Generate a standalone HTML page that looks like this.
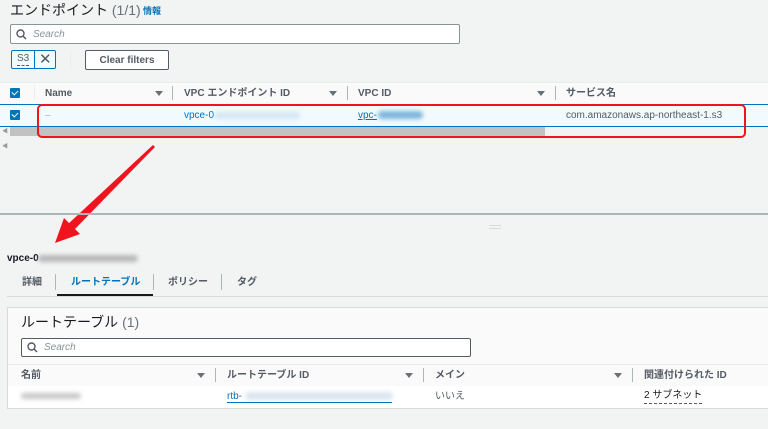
<!DOCTYPE html>
<html><head><meta charset="utf-8">
<style>
*{margin:0;padding:0;box-sizing:border-box}
body{width:768px;height:429px;overflow:hidden;background:#f2f3f3;font-family:"Liberation Sans","Noto Sans CJK JP",sans-serif;color:#16191f;position:relative;font-size:10px;line-height:16px}
.a{position:absolute;line-height:16px;white-space:nowrap}
.blur{position:absolute;border-radius:4px;filter:blur(2px)}
.chk{position:absolute;width:10px;height:10px;background:#0073bb;border-radius:1px}
.chk:after{content:"";position:absolute;left:3px;top:1px;width:3px;height:5px;border:solid #fff;border-width:0 1.5px 1.5px 0;transform:rotate(45deg)}
.tri{position:absolute;width:0;height:0;border-left:4px solid transparent;border-right:4px solid transparent;border-top:5px solid #687078}
.sep{position:absolute;width:1px;background:#aab7b8}
.hd{font-weight:bold;color:#545b64;font-size:10px}
</style></head><body>
<div class="a" style="left:10px;top:2px;font-size:14px;line-height:17px">エンドポイント <span style="color:#687078">(1/1)</span></div>
<div class="a" style="left:143px;top:3px;font-size:9px;color:#0073bb;font-weight:bold">情報</div>
<div class="a" style="left:10px;top:24px;width:450px;height:20px;background:#fff;border:1px solid #879596;border-radius:2px"></div>
<svg class="a" style="left:16px;top:29px" width="11" height="11"><circle cx="4.5" cy="4.5" r="3.5" stroke="#545b64" stroke-width="1.4" fill="none"/><line x1="7" y1="7" x2="10" y2="10" stroke="#545b64" stroke-width="1.5"/></svg>
<div class="a" style="left:33px;top:27px;font-style:italic;color:#879596;font-size:10px">Search</div>
<div class="a" style="left:11px;top:50px;width:45px;height:19px;border:1px solid #0073bb;background:#f1faff;border-radius:2px"></div>
<div class="a" style="left:34px;top:50px;width:1px;height:19px;background:#0073bb"></div>
<div class="a" style="left:17px;top:52px;font-size:10px;color:#545b64;border-bottom:1px dashed #545b64;line-height:13px">S3</div>
<div class="a" style="left:39px;top:52px;font-size:15px;line-height:15px;color:#545b64">✕</div>
<div class="a" style="left:70px;top:50px;width:1px;height:20px;background:#eaeded"></div>
<div class="a" style="left:85px;top:50px;width:84px;height:20px;border:1px solid #545b64;background:#fff;border-radius:2px;font-weight:bold;font-size:10px;color:#545b64;text-align:center;line-height:19px">Clear filters</div>
<div class="a" style="left:0;top:82px;width:768px;height:22px;background:#fafafa;border-top:1px solid #eaeded"></div>
<div class="chk" style="left:10px;top:88px"></div>
<div class="sep" style="left:34px;top:86px;height:14px;background:#eaeded"></div>
<div class="a hd" style="left:45px;top:86px">Name</div>
<div class="tri" style="left:155px;top:91px"></div>
<div class="sep" style="left:172px;top:86px;height:14px"></div>
<div class="a hd" style="left:184px;top:86px">VPC エンドポイント ID</div>
<div class="tri" style="left:329px;top:91px"></div>
<div class="sep" style="left:347px;top:86px;height:14px"></div>
<div class="a hd" style="left:358px;top:86px">VPC ID</div>
<div class="tri" style="left:537px;top:91px"></div>
<div class="sep" style="left:555px;top:86px;height:14px"></div>
<div class="a hd" style="left:566px;top:86px">サービス名</div>
<div class="a" style="left:0;top:104px;width:768px;height:23px;background:#f1faff;border-top:1px solid #0073bb;border-bottom:1px solid #0073bb"></div>
<div class="chk" style="left:10px;top:110px"></div>
<div class="a" style="left:45px;top:108px;color:#aab7b8">–</div>
<div class="a" style="left:184px;top:108px;color:#0073bb">vpce-0</div>
<div class="blur" style="left:215px;top:112px;width:85px;height:7px;background:#d4e6f3"></div>
<div class="a" style="left:358px;top:108px;color:#0073bb;text-decoration:underline">vpc-</div>
<div class="blur" style="left:378px;top:111px;width:45px;height:8px;background:#7db5dd"></div>
<div class="a" style="left:566px;top:108px;color:#545b64">com.amazonaws.ap-northeast-1.s3</div>
<div class="a" style="left:10px;top:127px;width:535px;height:9px;background:#c2c2c2"></div>
<div class="a" style="left:2px;top:124px;font-size:6px;color:#999">◀</div>
<div class="a" style="left:2px;top:139px;font-size:6px;color:#999">◀</div>
<div class="a" style="left:37px;top:104px;width:709px;height:34px;border:2px solid #f0141e;border-radius:5px"></div>
<svg class="a" style="left:0;top:0" width="768" height="429"><path d="M155 147 L153 145 L67 225 L73 231 Z" fill="#f0141e"/><path d="M55 243 L64 218 L80 234 Z" fill="#f0141e"/></svg>
<div class="a" style="left:0;top:213px;width:768px;height:2px;background:#aab7b8"></div>
<div class="a" style="left:489px;top:225px;width:12px;height:1px;background:#d5dbdb"></div>
<div class="a" style="left:489px;top:228px;width:12px;height:1px;background:#d5dbdb"></div>
<div class="a" style="left:7px;top:251px;font-weight:bold;font-size:10px">vpce-0</div>
<div class="blur" style="left:38px;top:255px;width:100px;height:7px;background:#b8b8b8"></div>
<div class="a" style="left:22px;top:275px;color:#545b64;font-weight:bold">詳細</div>
<div class="sep" style="left:55px;top:274px;height:16px"></div>
<div class="a" style="left:71px;top:275px;color:#0073bb;font-weight:bold">ルートテーブル</div>
<div class="a" style="left:57px;top:294px;width:96px;height:2px;background:#16191f"></div>
<div class="sep" style="left:153px;top:274px;height:16px"></div>
<div class="a" style="left:168px;top:275px;color:#545b64;font-weight:bold">ポリシー</div>
<div class="sep" style="left:221px;top:274px;height:16px"></div>
<div class="a" style="left:237px;top:275px;color:#545b64;font-weight:bold">タグ</div>
<div class="a" style="left:7px;top:296px;width:761px;height:1px;background:#d5dbdb"></div>
<div class="a" style="left:7px;top:307px;width:762px;height:102px;background:#fafafa;border:1px solid #d5dbdb;border-right:none"></div>
<div class="a" style="left:21px;top:314px;font-size:14px;line-height:17px">ルートテーブル <span style="color:#687078">(1)</span></div>
<div class="a" style="left:21px;top:338px;width:450px;height:19px;background:#fff;border:1px solid #545b64;border-radius:2px"></div>
<svg class="a" style="left:27px;top:342px" width="11" height="11"><circle cx="4.5" cy="4.5" r="3.5" stroke="#545b64" stroke-width="1.4" fill="none"/><line x1="7" y1="7" x2="10" y2="10" stroke="#545b64" stroke-width="1.5"/></svg>
<div class="a" style="left:44px;top:340px;font-style:italic;color:#879596">Search</div>
<div class="a" style="left:8px;top:364px;width:760px;height:1px;background:#eaeded"></div>
<div class="a hd" style="left:21px;top:368px">名前</div>
<div class="tri" style="left:197px;top:373px"></div>
<div class="sep" style="left:215px;top:368px;height:14px"></div>
<div class="a hd" style="left:227px;top:368px">ルートテーブル ID</div>
<div class="tri" style="left:405px;top:373px"></div>
<div class="sep" style="left:423px;top:368px;height:14px"></div>
<div class="a hd" style="left:435px;top:368px">メイン</div>
<div class="tri" style="left:614px;top:373px"></div>
<div class="sep" style="left:632px;top:368px;height:14px"></div>
<div class="a hd" style="left:644px;top:368px">関連付けられた ID</div>
<div class="a" style="left:8px;top:386px;width:760px;height:22px;background:#fff"></div>
<div class="blur" style="left:21px;top:393px;width:60px;height:6px;background:#c8c8c8"></div>
<div class="a" style="left:227px;top:389px;color:#0073bb">rtb-</div>
<div class="blur" style="left:245px;top:392px;width:148px;height:8px;background:#dbe6f0"></div>
<div class="a" style="left:227px;top:402px;width:165px;height:1px;background:#0073bb"></div>
<div class="a" style="left:435px;top:389px;color:#545b64">いいえ</div>
<div class="a" style="left:644px;top:389px;color:#16191f;border-bottom:1px dashed #545b64;line-height:14px">2 サブネット</div>
</body></html>
